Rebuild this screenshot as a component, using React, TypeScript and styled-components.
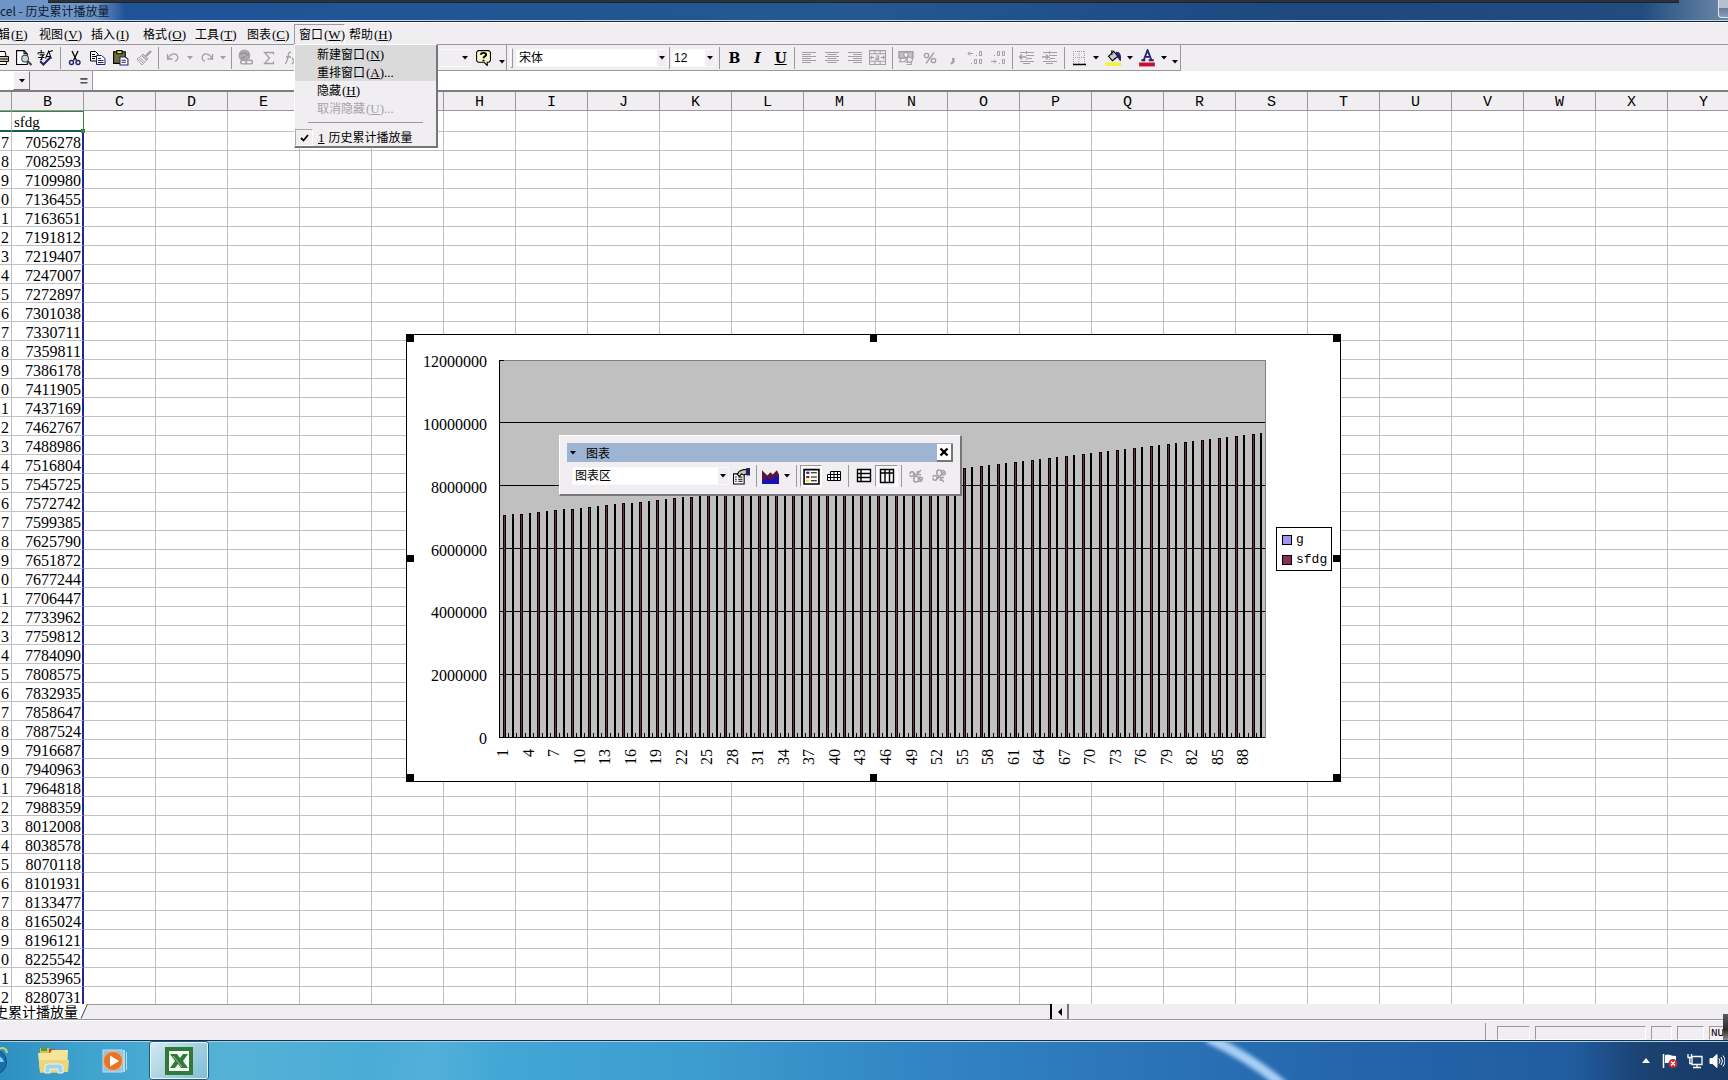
import React from "react";
import styled, { createGlobalStyle, css } from "styled-components";

const SANS = `"Liberation Sans", "Noto Sans CJK SC", sans-serif`;
const MONO = `"Liberation Mono", "Noto Sans CJK SC", monospace`;
const SERIF = `"Liberation Serif", "Noto Sans CJK SC", serif`;
const FACE = "#f0eef1";
const SHADE = "#9a989c";

const GlobalStyle = createGlobalStyle`
  *, *::before, *::after { box-sizing: border-box; }
  body { margin: 0; background: ${FACE}; font: 12px/16px ${SANS}; color: #000; overflow: hidden; }
  button, input, select { font: inherit; color: inherit; margin: 0; padding: 0; border: 0; background: none; border-radius: 0; outline: 0; }
  svg { display: block; flex: none; }
`;

/* ---------- frame ---------- */

const Window = styled.div`
  display: flex;
  flex-direction: column;
  height: 100vh;
  overflow: hidden;
`;

const TitleBar = styled.header`
  flex: none;
  height: 22px;
  display: flex;
  flex-direction: column;
  position: relative;
  background: linear-gradient(90deg, #6f95c6 0, #6f95c6 95px, #1f5397 125px, #24588f 50%, #1d4880 75%, #204c80 95%, #6e88a8 100%);
  border-bottom: 1px solid #16283f;
  box-shadow: inset 0 -1px #c3d6ec;
`;
const DarkEdge = styled.div`
  height: 3px;
  margin: 0 49px 0 48px;
  background: #2e3238;
  border-bottom: 1px solid #182334;
`;
const Title = styled.h1`
  margin: 0;
  font: 12px/16px "Noto Sans CJK SC", sans-serif;
  color: #0c1a30;
  white-space: pre;
`;
const CaptionButton = styled.button`
  position: absolute;
  top: 0;
  right: 0;
  width: 10px;
  height: 18px;
  border: 1px solid #dde6f0;
  border-width: 0 0 1px 1px;
  border-radius: 0 0 0 4px;
  background: linear-gradient(#b4c0d0 50%, #6a7d98 50%, #8c9db4);
`;

/* ---------- menu ---------- */

const MenuBar = styled.nav`
  flex: none;
  height: 22px;
  display: flex;
  align-items: flex-end;
  margin-left: -6px;
  border-top: 1px solid #fff;
`;
const MenuItem = styled.div<{ $w: number }>`
  position: relative;
  flex: none;
  width: ${(p) => p.$w}px;
`;
const MenuButton = styled.button<{ $open?: boolean }>`
  width: 100%;
  height: 20px;
  padding-left: 4px;
  text-align: left;
  white-space: nowrap;
  font: 12px/18px "Noto Sans CJK SC", sans-serif;
  ${(p) =>
    p.$open &&
    css`
      border: 1px solid ${SHADE};
      border-right-color: #fff;
      border-bottom: 0;
    `}
`;
const Latin = styled.span`
  font-family: ${SERIF};
  font-size: 13px;
  margin: 0 4px 0 1px;
`;
const Dropdown = styled.div`
  position: absolute;
  z-index: 10;
  top: 20px;
  left: 0;
  width: 144px;
  background: ${FACE};
  border: 1px solid #fff;
  border-right: 2px solid #77757a;
  border-bottom: 2px solid #77757a;
`;
const DropItem = styled.button<{ $lit?: boolean }>`
  display: grid;
  grid-template-columns: 18px 1fr;
  column-gap: 4px;
  align-items: center;
  width: 100%;
  height: 18px;
  text-align: left;
  white-space: nowrap;
  font: 12px/18px "Noto Sans CJK SC", sans-serif;
  background: ${(p) => (p.$lit ? "#dbdadb" : "transparent")};
  &:disabled { color: #a6a4a8; }
`;
const DropRule = styled.hr`
  margin: 5px 13px;
  border: 0;
  border-top: 1px solid ${SHADE};
`;
const CheckBox = styled.span`
  display: grid;
  place-items: center;
  width: 18px;
  height: 17px;
  border: 1px solid #aaa8ac;
  border-right-color: #fff;
  border-bottom-color: #fff;
`;

/* ---------- toolbars ---------- */

const ToolStrip = styled.div`
  flex: none;
  display: flex;
  height: 27px;
  border-top: 1px solid ${SHADE};
`;
const Toolbar = styled.div<{ $first?: boolean }>`
  flex: none;
  display: flex;
  align-items: center;
  height: 26px;
  margin-left: ${(p) => (p.$first ? "-10px" : "0")};
  border-right: 1px solid ${SHADE};
  border-bottom: 1px solid ${SHADE};
`;
const Tool = styled.button<{ $w?: number; $pressed?: boolean; $low?: boolean }>`
  flex: none;
  display: grid;
  place-items: center;
  width: ${(p) => p.$w ?? 23}px;
  height: 22px;
  padding-top: ${(p) => (p.$low ? 8 : 0)}px;
  ${(p) =>
    p.$pressed &&
    css`
      border: 1px solid ${SHADE};
      border-right-color: #fff;
      border-bottom-color: #fff;
      background: #f8f7f9;
    `}
`;
const Letter = styled(Tool)<{ $italic?: boolean; $under?: boolean }>`
  font: bold 14px/16px "DejaVu Serif", serif;
  font-style: ${(p) => (p.$italic ? "italic" : "normal")};
  text-decoration: ${(p) => (p.$under ? "underline" : "none")};
`;
const Rule = styled.span<{ $w?: number }>`
  flex: none;
  width: ${(p) => p.$w ?? 7}px;
  height: 22px;
  background: linear-gradient(${SHADE}, ${SHADE}) center / 1px 100% no-repeat;
`;
const Grip = styled.span`
  flex: none;
  width: 3px;
  height: 20px;
  margin: 0 4px 0 3px;
  border: 1px solid #fff;
  border-right-color: ${SHADE};
  border-bottom-color: ${SHADE};
`;
const Combo = styled.label<{ $w: number; $plain?: boolean }>`
  flex: none;
  display: grid;
  grid-template-columns: 1fr 10px;
  align-items: center;
  width: ${(p) => p.$w}px;
  height: 16px;
  background: ${(p) => (p.$plain ? FACE : `linear-gradient(90deg, #fff calc(100% - 10px), ${FACE} 0)`)};
  outline: 1px solid #f8f7f9;
  select {
    grid-area: 1 / 1 / 2 / 3;
    appearance: none;
    height: 16px;
    padding-left: 2px;
    font: 12px/16px ${SANS};
  }
  svg { grid-area: 1 / 2; justify-self: center; pointer-events: none; }
`;

/* ---------- formula bar ---------- */

const FormulaBar = styled.div`
  flex: none;
  display: flex;
  height: 21px;
  background: #fff;
  border-bottom: 2px solid #7f7d81;
`;
const NameDrop = styled.button`
  width: 17px;
  height: 19px;
  margin-left: 13px;
  display: grid;
  place-items: center;
  background: ${FACE};
  border: 1px solid #fff;
  border-right-color: #77757a;
  border-bottom-color: #77757a;
`;
const Equals = styled.button`
  width: 63px;
  padding-right: 4px;
  text-align: right;
  background: ${FACE};
  border-right: 1px solid ${SHADE};
  font: bold 14px/18px ${SANS};
  color: #555;
`;
const FormulaInput = styled.input`
  flex: 1;
  min-width: 0;
`;

/* ---------- sheet ---------- */

const Workspace = styled.main`
  flex: 1;
  min-height: 0;
  position: relative;
  overflow: hidden;
  background: #fff;
`;
const Sheet = styled.table`
  table-layout: fixed;
  width: 1740px;
  border-collapse: separate;
  border-spacing: 0;
  font: 16px/15px ${SERIF};
  th, td {
    height: 19px;
    padding: 3px 0 0;
    overflow: hidden;
    white-space: nowrap;
    border-right: 1px solid #c0c0c0;
    border-bottom: 1px solid #c0c0c0;
  }
  th {
    padding-top: 4px;
    background: ${FACE};
    border-color: ${SHADE};
    font: 15px/14px ${MONO};
  }
`;
const ColA = styled.col`width: 12px;`;
const Col = styled.col`width: 72px;`;
const NumCell = styled.td<{ $edge?: boolean }>`
  && { padding-right: 2px; text-align: right; }
  ${(p) => p.$edge && css`&& { padding-right: 1px; border-right: 2px solid #2a2490; }`}
`;
const TextCell = styled.td<{ $sel?: boolean }>`
  && {
    height: 21px;
    padding: 2px 0 0 ${(p) => (p.$sel ? 2 : 0)}px;
    border-top: 1px solid #2f8a3c;
    border-bottom: 2px solid #1f5a50;
    border-right: ${(p) => (p.$sel ? "1px solid #2f8a3c" : "1px solid #c0c0c0")};
    font-size: 15px;
    line-height: 16px;
  }
`;
const FillHandle = styled.span`
  position: absolute;
  left: 81px;
  top: 37px;
  width: 4px;
  height: 4px;
  background: #2f8a3c;
`;

/* ---------- chart ---------- */

const ChartFrame = styled.figure`
  position: absolute;
  left: 406px;
  top: 242px;
  width: 935px;
  height: 448px;
  margin: 0;
  background: #fff;
  border: 1px solid #000;
`;
const Handle = styled.i<{ $h: "start" | "center" | "end"; $v: "start" | "center" | "end" }>`
  position: absolute;
  inset: 0;
  width: 7px;
  height: 7px;
  background: #000;
  margin-left: ${(p) => (p.$h === "start" ? "0" : "auto")};
  margin-right: ${(p) => (p.$h === "end" ? "0" : "auto")};
  margin-top: ${(p) => (p.$v === "start" ? "0" : "auto")};
  margin-bottom: ${(p) => (p.$v === "end" ? "0" : "auto")};
`;
const Legend = styled.ul`
  position: absolute;
  right: 8px;
  top: 192px;
  width: 56px;
  margin: 0;
  padding: 2px 0 0 5px;
  list-style: none;
  border: 1px solid #000;
  background: #fff;
  font: 13px/20px ${MONO};
  li { display: flex; align-items: center; gap: 4px; }
`;
const Swatch = styled.span<{ $c: string }>`
  width: 10px;
  height: 10px;
  border: 1px solid #000;
  background: ${(p) => p.$c};
`;

/* ---------- floating chart toolbar ---------- */

const Palette = styled.section`
  position: absolute;
  z-index: 5;
  left: 559px;
  top: 343px;
  width: 403px;
  height: 61px;
  padding: 7px;
  background: ${FACE};
  border: 1px solid #fff;
  border-right: 2px solid #77757a;
  border-bottom: 2px solid #77757a;
`;
const PaletteTitle = styled.div`
  display: flex;
  align-items: center;
  gap: 10px;
  height: 19px;
  padding-left: 3px;
  background: #9db4d2;
  font: 12px/18px "Noto Sans CJK SC", sans-serif;
`;
const CloseButton = styled.button`
  width: 16px;
  height: 18px;
  margin-left: auto;
  display: grid;
  place-items: center;
  background: #fff;
  border-right: 2px solid #77757a;
  border-bottom: 2px solid #77757a;
`;
const PaletteRow = styled.div`
  display: flex;
  align-items: center;
  height: 28px;
  padding-left: 6px;
`;

/* ---------- bottom bars ---------- */

const TabBar = styled.div`
  flex: none;
  display: flex;
  height: 16px;
  border-bottom: 1px solid ${SHADE};
`;
const TabArea = styled.div`
  flex: 1051 1 0;
  min-width: 0;
  display: flex;
  border-top: 1px solid ${SHADE};
`;
const SheetTab = styled.button`
  flex: none;
  display: flex;
  height: 15px;
  margin-top: -1px;
  margin-left: -6px;
  background: #fff;
  white-space: nowrap;
  font: 14px/15px "Noto Sans CJK SC", sans-serif;
`;
const Splitter = styled.span`
  width: 2px;
  background: #000;
`;
const ScrollArea = styled.div`
  flex: 676 1 0;
  min-width: 0;
  display: flex;
`;
const ScrollButton = styled.button`
  width: 17px;
  display: grid;
  place-items: center;
  border-right: 2px solid #77757a;
`;
const StatusBar = styled.footer`
  flex: none;
  display: flex;
  justify-content: flex-end;
  height: 20px;
  padding-top: 2px;
  border-top: 1px solid #fff;
  position: relative;
`;
const StatusRule = styled.span`
  width: 12px;
  border-left: 1px solid ${SHADE};
`;
const StatusPane = styled.span<{ $w: number }>`
  flex: none;
  width: ${(p) => p.$w}px;
  height: 14px;
  margin: 3px 5px 0 0;
  padding-left: 1px;
  overflow: hidden;
  border: 1px solid ${SHADE};
  border-right-color: #fff;
  border-bottom-color: #fff;
  font: 11px/13px ${MONO};
  &:last-of-type { margin-right: 0; }
`;
const EdgeShade = styled.i`
  position: absolute;
  right: 0;
  bottom: 0;
  width: 5px;
  height: 26px;
  background: linear-gradient(#5a5a5c, #2c2c2e 60%, #8a8a8c);
`;
const Taskbar = styled.div`
  flex: none;
  height: 40px;
  display: flex;
  align-items: stretch;
  position: relative;
  border-top: 1px solid #12314f;
  box-shadow: inset 0 1px #a9cfe6;
  background:
    linear-gradient(100deg, transparent 40%, rgba(130, 205, 235, 0.2) 55%, transparent 72%) 200px 0 / 420px 100% no-repeat,
    linear-gradient(90deg, #2d8fc0 0, #3fa3ce 5%, #55b2d6 13%, #45a9d6 25%, #3d9dd0 40%, #3387c4 52%, #2b74b8 66%, #2566ac 77%, #215c9f 91%, #1b4272 95%, #183a66 100%);
`;
const Streak = styled.svg`
  position: absolute;
  left: 69%;
  top: 1px;
`;
const TaskButton = styled.button<{ $w: number; $active?: boolean }>`
  flex: none;
  width: ${(p) => p.$w}px;
  display: grid;
  place-items: center;
  ${(p) =>
    p.$active &&
    css`
      margin-left: 3px;
      border: 1px solid #d9f0f8;
      outline: 1px solid #24587c;
      outline-offset: -1px;
      box-shadow: inset 0 0 0 1px #e4f5fb;
      border-radius: 3px;
      background: linear-gradient(135deg, #d4ebf3, #a3cfe0 55%, #7fbdd6);
    `}
`;
const Tray = styled.div`
  margin-left: auto;
  display: flex;
  align-items: center;
`;
const TrayButton = styled.button<{ $w: number }>`
  flex: none;
  width: ${(p) => p.$w}px;
  height: 24px;
  display: grid;
  place-items: center;
`;

/* ---------- icons ---------- */

const Ic = ({ children, s = 16, fill = "none", stroke = "#000" }: { children: React.ReactNode; s?: number; fill?: string; stroke?: string }) => (
  <svg width={s} height={s} viewBox="0 0 16 16" fill={fill} stroke={stroke} aria-hidden="true">
    {children}
  </svg>
);
const Caret = ({ c = "#000" }: { c?: string }) => (
  <svg width="6" height="4" viewBox="0 0 6 4" fill={c} aria-hidden="true"><path d="M0 0h6L3 3.5z" /></svg>
);
const G = "#a19fa3";

const PrintIcon = () => (
  <Ic><path d="M4 6V1.5h7L12 6" fill="#fff" /><path d="M1.5 6.500h13v5h-13z" fill="#c9c8c0" /><path d="M3.500 11.500h9v3h-9z" fill="#fff" /><path d="M2 9h12" /><path d="M9 10.500h4" stroke="#c9c530" /></Ic>
);
const PreviewIcon = () => (
  <Ic s={17}><path d="M1.500 1.500h7l3 3v10h-10z" fill="#fff" /><path d="M8.500 1.500v3h3" /><circle cx="9.500" cy="9" r="3.200" fill="#c3dbe4" stroke="#444" /><path d="M12 11.500l3.500 3.500" strokeWidth="2" stroke="#444" /></Ic>
);
const SpellIcon = () => (
  <Ic s={17}><path d="M1 3.500h6M4 1v2.500M1 3.500v1.500M2.500 5.500h4L4.500 7.500v2.500H3M1 8h6M8 9l3-7 2.500 7M9 7h4M11.500 2.500l3.500-1" /><path d="M3 11.500l3 3 7-7" stroke="#22226e" strokeWidth="2" /></Ic>
);
const CutIcon = () => (
  <Ic><path d="M5 1l4.500 9.500M11 1L6.500 10.500" strokeWidth="1.300" /><circle cx="4.500" cy="12.500" r="2" stroke="#22226e" strokeWidth="1.400" /><circle cx="11" cy="12.500" r="2" stroke="#22226e" strokeWidth="1.400" /></Ic>
);
const CopyIcon = () => (
  <Ic><path d="M.5 1.500h5l2.500 2.500v7h-7.500z" fill="#fff" /><path d="M2 4.500h3M2 6.500h4M2 8.500h3" /><path d="M6.500 5.500h5l3.500 3v6H6.500z" fill="#fff" stroke="#22226e" /><path d="M8 8.500h3M8 10.500h5.500M8 12.500h5.500" stroke="#22226e" /></Ic>
);
const PasteIcon = () => (
  <Ic s={17}><path d="M1.500 2.500h11v11h-11z" fill="#6f6c35" /><path d="M4.500 1.500h5v3h-5z" fill="#e6e38a" /><path d="M7.500 7.500h5l2.500 2v5.500H7.500z" fill="#fff" stroke="#22226e" /><path d="M9 10.500h4M9 12.500h4" stroke="#22226e" /></Ic>
);
const BrushIcon = () => (
  <Ic stroke={G}><path d="M15 1l-5 5" strokeWidth="2.400" /><path d="M7 4l5 5-1.500 1.500-5-5z" fill="#c9c7cb" /><path d="M5.500 6L1 9l5 6 4-4.500M3 9l4 4M4.500 8l4 4" /></Ic>
);
const UndoIcon = ({ flip }: { flip?: boolean }) => (
  <Ic stroke={G}><g transform={flip ? "matrix(-1 0 0 1 16 0)" : undefined}><path d="M2.500 4v5h5M3 8.500C5.500 3 11 3 12.500 6c1 2 0 4.500-2.500 5.500" strokeWidth="1.300" /></g></Ic>
);
const LinkIcon = () => (
  <Ic s={17} stroke={G}><circle cx="7" cy="6" r="5" fill="#aeacb0" /><path d="M3 4c2 2 3-2 5 0s2 3 3 1M4 9l4-2" stroke="#8c8a8e" /><rect x="3.500" y="10.500" width="6" height="3.500" rx="1.700" fill={FACE} strokeWidth="1.400" /><rect x="8.500" y="10.500" width="6" height="3.500" rx="1.700" fill={FACE} strokeWidth="1.400" /></Ic>
);
const SumIcon = () => (<Ic stroke={G}><path d="M12.500 4.500v-2H3.500L8.500 8l-5 5.500h9v-2" strokeWidth="1.300" /></Ic>);
const FxIcon = () => (<Ic stroke={G}><path d="M8 2.500c-2-1-2.500 1-3 4S4 13 2 13.500M3 7h5M9 8l5 6M14 8l-5 6" strokeWidth="1.300" /></Ic>);
const HelpIcon = () => (
  <Ic s={17}><path d="M3 1.500h10l1.500 1.500v8L13 12.500h-1.500v3l-3-3H3L1.500 11V3z" fill="#fdfbd0" /><path d="M5.500 5.500c0-2.500 5-2.500 5 0C10.500 7 8 7 8 8.800M8 10v1.500" strokeWidth="1.800" /></Ic>
);
const AlignIcon = ({ kind }: { kind: "l" | "c" | "r" }) => {
  const x = (w: number) => ({ l: 1, c: 1 + (14 - w) / 2, r: 15 - w }[kind]);
  return (
    <Ic stroke={G}>{[14, 9, 14, 9, 14, 9].map((w, i) => (<path key={i} d={`M${x(w)} ${2.5 + i * 2}h${w}`} />))}</Ic>
  );
};
const MergeIcon = () => (
  <Ic s={17} stroke={G}><path d="M.5 1.500h15v13H.5zM.5 4.500h15M.5 11.500h15M5.500 1.500v3M10.500 1.500v3M5.500 11.500v3M10.500 11.500v3" /><path d="M1 8h4M3 6.500L1.500 8 3 9.500M15 8h-4M13 6.500L14.500 8 13 9.500M6.500 6.500h2.500v3.500H6.500V8.500H9" /></Ic>
);
const MoneyIcon = () => (
  <Ic stroke={G} s={17}><path d="M1 2.500h13v6H1z" fill="#c4c2c6" strokeWidth="1.400" /><ellipse cx="7.500" cy="5.500" rx="2" ry="2.500" fill={FACE} /><path d="M3 9l-1.500 3H6l2-2h4M7 12.500h6M8 14.500h5M12.500 8v6" /><circle cx="11" cy="10" r="2.500" fill={FACE} /></Ic>
);
const PercentIcon = () => (<Ic stroke={G}><circle cx="4.500" cy="5.500" r="2.200" strokeWidth="1.300" /><circle cx="11.500" cy="10.500" r="2.200" strokeWidth="1.300" /><path d="M12 2.500L4 13.500" strokeWidth="1.300" /></Ic>);
const CommaIcon = () => (<Ic stroke={G}><path d="M8 9h1.500v2.500L7 14" strokeWidth="2.200" /></Ic>);
const DecIcon = ({ less }: { less?: boolean }) => (
  <Ic stroke={G}>
    {less ? (
      <path d="M4 5.500h1M7.500 1.500h2v4h-2zM12.500 1.500h2v4h-2zM1 11.500h5M4 9.500l2 2-2 2M9 13.500h1M12.500 9.500h2v4h-2z" />
    ) : (
      <path d="M1 3.500h5M3 1.500l-2 2 2 2M9 5.500h1M12.500 1.500h2v4h-2zM4 13.500h1M7.500 9.500h2v4h-2zM12.500 9.500h2v4h-2z" />
    )}
  </Ic>
);
const IndentIcon = ({ out }: { out?: boolean }) => (
  <Ic stroke={G}><path d="M1 2.500h14M8 5.500h7M8 8.500h5M1 11.500h14M4 13.500h7" /><path d={out ? "M0 7h7M3 4.500L.5 7 3 9.500" : "M0 7h7M4 4.500L6.500 7 4 9.500"} strokeWidth="1.300" /><path d="M7.500 1v14" strokeDasharray="1 1" /></Ic>
);
const BorderIcon = () => (
  <Ic stroke={G}><path d="M2.500 1v13M8 1v13M13.500 1v13M2 1.500h12M2 7.500h12" strokeDasharray="1 1" /><path d="M2 14.500h13" stroke="#000" strokeWidth="1.500" /></Ic>
);
const FillIcon = () => (
  <Ic s={18}><path d="M4 6.500L8.500 2l4 4.500-5 4z" fill="#c9c9c4" /><path d="M7 1v4" /><path d="M11 3c3 0 4 2 3.500 7C13 9 13 7 11.500 5z" fill="#22226e" stroke="#22226e" /><path d="M1 12h14v3H1z" fill="#f5f232" stroke="none" /></Ic>
);
const FontColorIcon = () => (
  <Ic s={18}><path d="M3 10h3.500M9.500 10H14M5 10l3.500-9 3.500 9M6 7h5" stroke="#22226e" strokeWidth="1.600" /><path d="M1 12h14v3.500H1z" fill="#c8102e" stroke="none" /></Ic>
);
const CheckIcon = () => (<svg width="9" height="8" viewBox="0 0 9 8" fill="none" stroke="#000" strokeWidth="1.800" aria-hidden="true"><path d="M1 4l2.500 2.500L8 1" /></svg>);
const CloseIcon = () => (<svg width="10" height="10" viewBox="0 0 10 10" stroke="#000" strokeWidth="2.400" aria-hidden="true"><path d="M1.500 1.500l7 7M8.500 1.500l-7 7" /></svg>);
const PropsIcon = () => (
  <Ic s={17}><path d="M.5 5.500h10v9.500H.5z" fill="#fff" /><path d="M2 8.500h1.500M5 8.500h4M2 10.500h1.500M5 10.500h4M2 12.500h1.500M5 12.500h4" /><path d="M4 6l2-3 4-1.500h3v4l-3 1L8 5.500 6 8z" fill="#c9c7a8" /><path d="M13 .500h2.500v6H13z" fill="#22226e" stroke="#22226e" /></Ic>
);
const AreaIcon = () => (
  <Ic s={17}><path d="M0 15V2l5 5 3-3 2 2 4-4 2 4v9z" fill="#5d1634" stroke="none" /><path d="M0 15v-3l5-3 3 2 4-3 4-1v8z" fill="#1c12b4" stroke="none" /></Ic>
);
const LegendIcon = () => (
  <Ic s={17}><path d="M1 1.500h14v13.500H1z" fill="#fffef0" strokeWidth="1.500" /><path d="M3 3.500h3v2H3z" fill="#2828a0" stroke="none" /><path d="M3 7.500h3v2H3z" fill="#8a2048" stroke="none" /><path d="M3 11h3v2H3z" fill="#e6dc50" stroke="none" /><path d="M7.500 4.500H13M7.500 8.500H13M7.500 12H13" /></Ic>
);
const DataTableIcon = () => (<Ic><path d="M4.500 3.500h10v9H1.500v-6h13M1.500 9.500h13M4.500 3.500v9M8 3.500v9M11.500 3.500v9" fill="#fff" /></Ic>);
const ByRowIcon = () => (<Ic><path d="M1.500 1.500h13v12h-13zM5 1.500v12M1.500 5.500h13M1.500 9.500h13" fill="#fff" strokeWidth="1.400" /></Ic>);
const ByColIcon = () => (<Ic><path d="M1.500 1.500h13v13h-13zM1.500 5h13M6 1.500v13M10.500 1.500v13" fill="#fff" strokeWidth="1.400" /></Ic>);
const AngleIcon = ({ up }: { up?: boolean }) => (
  <Ic stroke={G}>
    <g transform={up ? "matrix(1 0 0 -1 0 16)" : undefined} strokeWidth="1.500">
      <path d="M2 6c0-3 4-3 4 0s-4 3-4 1M6 5l7 7M8 8c-3 1-3 6 0 6s3-3 2-4M10 10c4-2 5 0 4 2s-3 2-4 0" />
      <path d="M13 2L9 6M9.500 3v3.500H13" />
    </g>
  </Ic>
);

/* ---------- data ---------- */

const VALUES = [
  7056278, 7082593, 7109980, 7136455, 7163651, 7191812, 7219407, 7247007, 7272897, 7301038, 7330711, 7359811,
  7386178, 7411905, 7437169, 7462767, 7488986, 7516804, 7545725, 7572742, 7599385, 7625790, 7651872, 7677244,
  7706447, 7733962, 7759812, 7784090, 7808575, 7832935, 7858647, 7887524, 7916687, 7940963, 7964818, 7988359,
  8012008, 8038578, 8070118, 8101931, 8133477, 8165024, 8196121, 8225542, 8253965, 8280731,
];
const SERIES = Array.from({ length: 90 }, (_, i) =>
  i < VALUES.length ? VALUES[i] : VALUES[45] + (i - 45) * 31500,
);
const COLUMNS = "BCDEFGHIJKLMNOPQRSTUVWXY".split("");
const BLANKS = COLUMNS.slice(1);

const MENUS = [
  { w: 41, label: "辑", key: "E" },
  { w: 52, label: "视图", key: "V" },
  { w: 52, label: "插入", key: "I" },
  { w: 52, label: "格式", key: "O" },
  { w: 52, label: "工具", key: "T" },
  { w: 51, label: "图表", key: "C" },
];

const Accel = ({ k, more }: { k: string; more?: boolean }) => (
  <Latin>(<u>{k}</u>){more && "..."}</Latin>
);

/* ---------- chart drawing ---------- */

const PLOT = { x: 92, y: 25, w: 766, h: 377 };
const yOf = (v: number) => PLOT.y + PLOT.h - (v / 12000000) * PLOT.h;

const BarChart = () => {
  const step = PLOT.w / SERIES.length;
  const base = PLOT.y + PLOT.h;
  return (
    <svg width="933" height="446" viewBox="0 0 933 446" role="img" aria-label="sfdg">
      <g shapeRendering="crispEdges">
        <rect x={PLOT.x} y={PLOT.y} width={PLOT.w} height={PLOT.h} fill="#c0c0c0" stroke="#808080" />
        {[2, 4, 6, 8, 10].map((m) => (
          <path key={m} d={`M${PLOT.x} ${Math.floor(yOf(m * 1e6)) + 0.5}h${PLOT.w}`} stroke="#000" />
        ))}
        {SERIES.map((v, i) => {
          const x = Math.round(PLOT.x + i * step + 4);
          const y = Math.round(yOf(v));
          return i % 2 ? (
            <rect key={i} x={x} y={y} width="2" height={base - y} fill="#000" />
          ) : (
            <g key={i}>
              <rect x={x} y={y} width="3" height={base - y} fill="#000" />
              <rect x={x + 1} y={y + 1} width="1" height={base - y - 1} fill="#6c2a4c" />
            </g>
          );
        })}
        {SERIES.map((_, i) => (
          <path key={i} d={`M${Math.round(PLOT.x + i * step) + 0.5} ${base}v-4`} stroke="#000" />
        ))}
        <path d={`M${PLOT.x + 5} ${PLOT.y + 0.5}h-5V${base + 0.5}h${PLOT.w}`} fill="none" stroke="#000" />
      </g>
      <g fontFamily="Liberation Serif, serif" fontSize="16" textAnchor="end">
        {[0, 2, 4, 6, 8, 10, 12].map((m) => (
          <text key={m} x="80" y={Math.round(yOf(m * 1e6)) + 7}>{m * 1000000}</text>
        ))}
      </g>
      <g fontFamily="Liberation Serif, serif" fontSize="16" textAnchor="end">
        {SERIES.map((_, i) =>
          i % 3 === 0 ? (
            <text key={i} transform={`translate(${Math.round(PLOT.x + i * step + 9)} 414) rotate(-90)`}>{i + 1}</text>
          ) : null,
        )}
      </g>
    </svg>
  );
};

export default function App() {
  return (
    <Window>
      <GlobalStyle />
      <TitleBar>
        <DarkEdge />
        <Title>cel - 历史累计播放量</Title>
        <CaptionButton aria-label="最小化" />
      </TitleBar>

      <MenuBar>
        {MENUS.map((m) => (
          <MenuItem key={m.key} $w={m.w}>
            <MenuButton>{m.label}<Accel k={m.key} /></MenuButton>
          </MenuItem>
        ))}
        <MenuItem $w={51}>
          <MenuButton $open aria-expanded="true">窗口<Accel k="W" /></MenuButton>
          <Dropdown>
            <DropItem $lit><span />
              <span>新建窗口<Accel k="N" /></span>
            </DropItem>
            <DropItem $lit><span />
              <span>重排窗口<Accel k="A" more /></span>
            </DropItem>
            <DropItem><span />
              <span>隐藏<Accel k="H" /></span>
            </DropItem>
            <DropItem disabled><span />
              <span>取消隐藏<Accel k="U" more /></span>
            </DropItem>
            <DropRule />
            <DropItem>
              <CheckBox><CheckIcon /></CheckBox>
              <span><Latin><u>1</u></Latin>历史累计播放量</span>
            </DropItem>
          </Dropdown>
        </MenuItem>
        <MenuItem $w={52}>
          <MenuButton>帮助<Accel k="H" /></MenuButton>
        </MenuItem>
      </MenuBar>

      <ToolStrip>
        <Toolbar $first>
          <Tool aria-label="打印"><PrintIcon /></Tool>
          <Tool $w={21} aria-label="打印预览"><PreviewIcon /></Tool>
          <Tool aria-label="拼写检查"><SpellIcon /></Tool>
          <Rule />
          <Tool $w={22} aria-label="剪切"><CutIcon /></Tool>
          <Tool aria-label="复制"><CopyIcon /></Tool>
          <Tool aria-label="粘贴"><PasteIcon /></Tool>
          <Tool aria-label="格式刷"><BrushIcon /></Tool>
          <Rule $w={6} />
          <Tool aria-label="撤消"><UndoIcon /></Tool>
          <Tool $w={11} aria-label="撤消列表"><Caret c={G} /></Tool>
          <Tool aria-label="恢复"><UndoIcon flip /></Tool>
          <Tool $w={10} aria-label="恢复列表"><Caret c={G} /></Tool>
          <Rule $w={6} />
          <Tool aria-label="超链接"><LinkIcon /></Tool>
          <Tool aria-label="自动求和"><SumIcon /></Tool>
          <Tool $w={22} aria-label="粘贴函数"><FxIcon /></Tool>
          <Combo $w={168} $plain>
            <select aria-label="显示比例" /><Caret />
          </Combo>
          <Tool $w={27} aria-label="帮助"><HelpIcon /></Tool>
          <Tool $w={9} $low aria-label="更多按钮"><Caret /></Tool>
        </Toolbar>
        <Toolbar>
          <Grip />
          <Combo $w={150}>
            <select aria-label="字体"><option>宋体</option></select><Caret />
          </Combo>
          <Rule $w={5} />
          <Combo $w={43}>
            <select aria-label="字号"><option>12</option></select><Caret />
          </Combo>
          <Rule $w={8} />
          <Letter aria-label="加粗">B</Letter>
          <Letter $italic aria-label="倾斜">I</Letter>
          <Letter $under aria-label="下划线">U</Letter>
          <Rule $w={5} />
          <Tool aria-label="左对齐"><AlignIcon kind="l" /></Tool>
          <Tool aria-label="居中"><AlignIcon kind="c" /></Tool>
          <Tool aria-label="右对齐"><AlignIcon kind="r" /></Tool>
          <Tool aria-label="合并及居中"><MergeIcon /></Tool>
          <Rule $w={6} />
          <Tool aria-label="货币样式"><MoneyIcon /></Tool>
          <Tool aria-label="百分比样式"><PercentIcon /></Tool>
          <Tool $w={22} aria-label="千位分隔样式"><CommaIcon /></Tool>
          <Tool aria-label="增加小数位数"><DecIcon /></Tool>
          <Tool aria-label="减少小数位数"><DecIcon less /></Tool>
          <Rule $w={6} />
          <Tool aria-label="减少缩进量"><IndentIcon out /></Tool>
          <Tool aria-label="增加缩进量"><IndentIcon /></Tool>
          <Rule $w={6} />
          <Tool aria-label="边框"><BorderIcon /></Tool>
          <Tool $w={11} aria-label="边框列表"><Caret /></Tool>
          <Tool aria-label="填充颜色"><FillIcon /></Tool>
          <Tool $w={11} aria-label="填充颜色列表"><Caret /></Tool>
          <Tool aria-label="字体颜色"><FontColorIcon /></Tool>
          <Tool $w={11} aria-label="字体颜色列表"><Caret /></Tool>
          <Tool $w={11} $low aria-label="其他按钮"><Caret /></Tool>
        </Toolbar>
      </ToolStrip>

      <FormulaBar>
        <NameDrop aria-label="名称框"><Caret /></NameDrop>
        <Equals>=</Equals>
        <FormulaInput aria-label="编辑栏" />
      </FormulaBar>

      <Workspace>
        <Sheet>
          <colgroup>
            <ColA />
            {COLUMNS.map((c) => <Col key={c} />)}
          </colgroup>
          <thead>
            <tr>
              <th />
              {COLUMNS.map((c) => <th key={c} scope="col">{c}</th>)}
            </tr>
          </thead>
          <tbody>
            <tr>
              <TextCell />
              <TextCell $sel>sfdg</TextCell>
              {BLANKS.map((c) => <td key={c} />)}
            </tr>
            {VALUES.map((v, i) => (
              <tr key={v}>
                <NumCell>{(i + 7) % 10}</NumCell>
                <NumCell $edge>{v}</NumCell>
                {BLANKS.map((c) => <td key={c} />)}
              </tr>
            ))}
          </tbody>
        </Sheet>
        <FillHandle />

        <ChartFrame>
          <BarChart />
          <Legend>
            <li><Swatch $c="#9f94ee" />g</li>
            <li><Swatch $c="#82305a" />sfdg</li>
          </Legend>
          <Handle $h="start" $v="start" />
          <Handle $h="center" $v="start" />
          <Handle $h="end" $v="start" />
          <Handle $h="start" $v="center" />
          <Handle $h="end" $v="center" />
          <Handle $h="start" $v="end" />
          <Handle $h="center" $v="end" />
          <Handle $h="end" $v="end" />
        </ChartFrame>

        <Palette>
          <PaletteTitle>
            <Caret />图表
            <CloseButton aria-label="关闭"><CloseIcon /></CloseButton>
          </PaletteTitle>
          <PaletteRow>
            <Combo $w={155}>
              <select aria-label="图表对象"><option>图表区</option></select><Caret />
            </Combo>
            <Tool $w={26} aria-label="格式"><PropsIcon /></Tool>
            <Rule $w={5} />
            <Tool $w={22} aria-label="图表类型"><AreaIcon /></Tool>
            <Tool $w={12} aria-label="图表类型列表"><Caret /></Tool>
            <Rule />
            <Tool $w={22} $pressed aria-label="图例"><LegendIcon /></Tool>
            <Tool aria-label="数据表"><DataTableIcon /></Tool>
            <Rule />
            <Tool aria-label="按行"><ByRowIcon /></Tool>
            <Tool $pressed aria-label="按列"><ByColIcon /></Tool>
            <Rule $w={6} />
            <Tool aria-label="向下斜排文字"><AngleIcon /></Tool>
            <Tool aria-label="向上斜排文字"><AngleIcon up /></Tool>
          </PaletteRow>
        </Palette>
      </Workspace>

      <TabBar>
        <TabArea>
          <SheetTab>
            史累计播放量
            <svg width="10" height="15" viewBox="0 0 10 15" aria-hidden="true">
              <path d="M2 0h8v15H2z" fill={FACE} />
              <path d="M0 0h9L3 15H0z" fill="#fff" />
              <path d="M9.500 0L3 14.500" stroke="#444" />
            </svg>
          </SheetTab>
        </TabArea>
        <Splitter />
        <ScrollArea>
          <ScrollButton aria-label="向左滚动">
            <svg width="4" height="8" viewBox="0 0 4 8" aria-hidden="true"><path d="M4 0v8L0 4z" /></svg>
          </ScrollButton>
        </ScrollArea>
      </TabBar>
      <StatusBar>
        <StatusRule />
        <StatusPane $w={33} />
        <StatusPane $w={111} />
        <StatusPane $w={21} />
        <StatusPane $w={27} />
        <StatusPane $w={19}>NU</StatusPane>
        <EdgeShade />
      </StatusBar>

      <Taskbar>
        <Streak width="110" height="39" viewBox="0 0 110 39" aria-hidden="true">
          <defs><filter id="soft"><feGaussianBlur stdDeviation="2" /></filter></defs>
          <path d="M16 -4Q60 16 94 46" fill="none" stroke="#a9d0f6" strokeWidth="10" filter="url(#soft)" />
        </Streak>
        <TaskButton $w={24} aria-label="Internet Explorer">
          <svg width="24" height="34" viewBox="0 0 24 34" aria-hidden="true">
            <circle cx="-6" cy="18" r="12.500" fill="#1a6fa6" stroke="#0f4c7c" />
            <path d="M-6 11Q2 11 4 18H-6z" fill="#7dd0f0" />
            <path d="M-4 6Q6 1 7 9" fill="none" stroke="#b8d67a" strokeWidth="2" />
          </svg>
        </TaskButton>
        <TaskButton $w={60} aria-label="资源管理器">
          <svg width="34" height="32" viewBox="0 0 34 32" aria-hidden="true">
            <path d="M3 3h9l2 3h12v22H3z" fill="#dcbf5c" />
            <path d="M4 2h6v4H4z" fill="#4da04a" /><path d="M12 4h6v4h-6z" fill="#b8502c" /><path d="M21 3h6v4h-6z" fill="#5d8fc0" />
            <path d="M1 8h12l2-3h16l-1 22H3z" fill="#f5e59a" />
            <path d="M2 15h30l-1 12H3z" fill="#ecd67c" />
            <path d="M8 28v-6q0-3 3-3h12q3 0 3 3v6h-5v-4h-8v4z" fill="#9fd4ee" stroke="#e5f6fc" />
          </svg>
        </TaskButton>
        <TaskButton $w={62} aria-label="媒体播放器">
          <svg width="26" height="26" viewBox="0 0 26 26" aria-hidden="true">
            <path d="M21 2h2v22h-2zM24 4h1v18h-1z" fill="#b5dcec" />
            <rect x="1" y="2" width="19" height="22" fill="#8fc3e0" stroke="#bfe2f0" />
            <circle cx="11" cy="13" r="9.500" fill="#e87424" stroke="#f5b27c" />
            <path d="M8 7.500v11l9-5.500z" fill="#fff" />
          </svg>
        </TaskButton>
        <TaskButton $w={60} $active aria-label="Excel">
          <svg width="28" height="28" viewBox="0 0 28 28" aria-hidden="true">
            <path d="M2 2h24v24H2z" fill="#f4faf2" stroke="#2f7a3a" strokeWidth="4" />
            <path d="M5 7h7l3 4 3-4h5l-5 7 5 7h-7l-3-4-3 4H5l5-7z" fill="#2f7a3a" />
            <path d="M8 9l9 11" stroke="#9cc89e" />
          </svg>
        </TaskButton>
        <Tray>
          <TrayButton $w={22} aria-label="显示隐藏的图标">
            <svg width="8" height="5" viewBox="0 0 8 5" fill="#fff" aria-hidden="true"><path d="M0 5h8L4 0z" /></svg>
          </TrayButton>
          <TrayButton $w={26} aria-label="操作中心">
            <svg width="16" height="16" viewBox="0 0 16 16" aria-hidden="true">
              <path d="M1.500 1v14" stroke="#fff" strokeWidth="1.500" />
              <path d="M3 2q3-1 5 0t6 1v7H3z" fill="#fff" />
              <circle cx="11" cy="10.500" r="4.500" fill="#cc2a34" />
              <path d="M9 8.500l4 4M13 8.500l-4 4" stroke="#fff" strokeWidth="1.400" />
            </svg>
          </TrayButton>
          <TrayButton $w={23} aria-label="网络">
            <svg width="16" height="16" viewBox="0 0 16 16" fill="none" stroke="#fff" strokeWidth="1.300" aria-hidden="true">
              <path d="M5 3.500h10v8H5zM10 12v2M6 14.500h8M1 1v3.500h3.500V1M2.800 5v5.500H5" />
            </svg>
          </TrayButton>
          <TrayButton $w={22} aria-label="音量">
            <svg width="16" height="16" viewBox="0 0 16 16" fill="none" stroke="#fff" aria-hidden="true">
              <path d="M1 5.500h2.500L8 1.500v13l-4.500-4H1z" fill="#fff" />
              <path d="M10 5.500q2 2.500 0 5M12 4q3 4 0 8M14 2.500q4 5.500 0 11" />
            </svg>
          </TrayButton>
        </Tray>
      </Taskbar>
    </Window>
  );
}
